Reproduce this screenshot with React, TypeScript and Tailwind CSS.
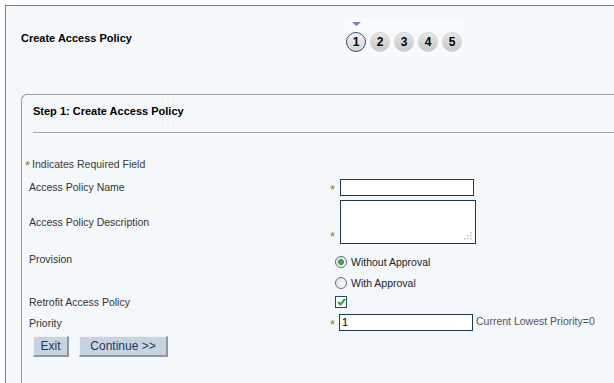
import React from "react";

const font = { fontFamily: '"Liberation Sans", Arial, sans-serif' };

function Star({ className = "" }: { className?: string }) {
  return <span className={"text-[#9a7a2a] text-[13px] leading-[10px] " + className}>*</span>;
}

function Step({ n, active }: { n: number; active?: boolean }) {
  return (
    <div
      className={
        "w-[20px] h-[20px] rounded-full flex items-center justify-center text-[12px] font-bold text-black leading-none " +
        (active
          ? "border border-[#2c4d72] bg-gradient-to-b from-[#f2f2f2] to-[#d6d6d6]"
          : "border border-[#d2d2d2] bg-gradient-to-b from-[#e6e6e6] to-[#c9c9c9]")
      }
    >
      {n}
    </div>
  );
}

function Radio({ checked }: { checked?: boolean }) {
  return (
    <div className="w-[12px] h-[12px] rounded-full border border-[#5b6b7c] bg-gradient-to-br from-[#dfe3e8] to-white flex items-center justify-center">
      {checked && <div className="w-[6px] h-[6px] rounded-full bg-[#3fae3f] border border-[#2c8a2c]" />}
    </div>
  );
}

function Button({ children, w }: { children: React.ReactNode; w: string }) {
  return (
    <div
      className={
        "h-[21px] flex items-center justify-center bg-[#c8d3e1] text-[#22395a] text-[12px] border-t border-l border-t-[#eef2f7] border-l-[#eef2f7] border-r-2 border-b-2 border-r-[#8c98a6] border-b-[#8c98a6] " +
        w
      }
    >
      {children}
    </div>
  );
}

export default function App() {
  return (
    <div style={font} className="w-[614px] h-[383px] bg-white pt-[5px] pl-[5px] overflow-hidden">
      <div className="h-full border-t border-l border-[#828282] bg-[#f4f8fb] flex flex-col">
        {/* header */}
        <div className="h-[88px] flex items-start pl-[15px]">
          <div className="w-[322px] mt-[25px] text-[11px] leading-[14px] font-bold text-black">
            Create Access Policy
          </div>
          <div className="mt-[12px] pt-[4px] pb-[4px] pl-[3px] pr-[3px] bg-white/40 flex flex-col">
            <svg width="9" height="4" viewBox="0 0 9 4" className="ml-[6px]">
              <polygon points="0,0 9,0 4.5,4" fill="#6d7fcf" />
            </svg>
            <div className="mt-[6px] flex gap-[4px]">
              <Step n={1} active />
              <Step n={2} />
              <Step n={3} />
              <Step n={4} />
              <Step n={5} />
            </div>
          </div>
        </div>

        {/* panel */}
        <div className="ml-[15px] flex-1 border-t border-l border-[#9a9a9a] rounded-tl-[6px] flex flex-col">
          <div className="pt-[9px] pl-[11px] text-[11px] leading-[14px] font-bold text-black">
            Step 1: Create Access Policy
          </div>
          <div className="ml-[11px] mt-[14px] h-[2px] border-t border-[#a3a3a3] border-b border-b-white" />

          <div className="mt-[23px] pl-[3px] h-[14px] text-[10.5px] leading-[14px] text-[#3a3a3a] flex items-center">
            <Star className="mr-[2px] mt-[3px]" />
            Indicates Required Field
          </div>

          <div className="mt-[6px] grid grid-cols-[308px_1fr] text-[10.5px] text-[#333]">
            {/* name */}
            <div className="h-[21px] pl-[7px] flex items-center">Access Policy Name</div>
            <div className="h-[21px] flex items-center">
              <Star className="w-[10px] pt-[5px]" />
              <div className="w-[134px] h-[17px] bg-white border border-[#1d3a52]" />
            </div>

            {/* description */}
            <div className="h-[48px] pl-[7px] pt-[2px] flex items-center">Access Policy Description</div>
            <div className="h-[48px] flex items-end pb-[2px]">
              <Star className="w-[10px] mb-[2px]" />
              <div className="w-[136px] h-[44px] bg-white border border-[#1d3a52] flex items-end justify-end pr-[3px] pb-[3px]">
                <svg width="8" height="8" viewBox="0 0 8 8">
                  <rect x="6" y="0" width="1.5" height="1.5" fill="#b8b8b8" />
                  <rect x="3" y="3" width="1.5" height="1.5" fill="#b8b8b8" />
                  <rect x="6" y="3" width="1.5" height="1.5" fill="#b8b8b8" />
                  <rect x="0" y="6" width="1.5" height="1.5" fill="#b8b8b8" />
                  <rect x="3" y="6" width="1.5" height="1.5" fill="#b8b8b8" />
                  <rect x="6" y="6" width="1.5" height="1.5" fill="#b8b8b8" />
                </svg>
              </div>
            </div>

            {/* provision */}
            <div className="h-[47px] pl-[7px] pt-[6px] leading-[14px]">Provision</div>
            <div className="h-[47px] pl-[5px] pt-[5px] flex flex-col">
              <div className="h-[21px] flex items-center gap-[4px]">
                <Radio checked />
                <span className="text-[#222] mt-[2px]">Without Approval</span>
              </div>
              <div className="h-[21px] flex items-center gap-[4px]">
                <Radio />
                <span className="text-[#222] mt-[3px]">With Approval</span>
              </div>
            </div>

            {/* retrofit */}
            <div className="h-[18px] pl-[7px] pt-[2px] flex items-center">Retrofit Access Policy</div>
            <div className="h-[18px] pl-[5px] flex items-center">
              <div className="w-[12px] h-[12px] bg-white border border-[#2a4860] flex items-center justify-center">
                <svg width="9" height="8" viewBox="0 0 9 8">
                  <path d="M1 4 L3.5 6.5 L8 1" stroke="#2e9e34" strokeWidth="2" fill="none" />
                </svg>
              </div>
            </div>

            {/* priority */}
            <div className="h-[22px] pl-[7px] pt-[3px] flex items-center">Priority</div>
            <div className="h-[22px] flex items-center">
              <Star className="w-[9px] pt-[5px]" />
              <div className="w-[134px] h-[17px] bg-white border border-[#1d3a52] flex items-center pl-[2px] text-[11px] text-black">
                1
              </div>
              <span className="ml-[3px] text-[#555]">Current Lowest Priority=0</span>
            </div>
          </div>

          <div className="mt-[3px] pl-[11px] flex gap-[10px]">
            <Button w="w-[36px]">Exit</Button>
            <Button w="w-[89px]">Continue &gt;&gt;</Button>
          </div>
        </div>
      </div>
    </div>
  );
}
